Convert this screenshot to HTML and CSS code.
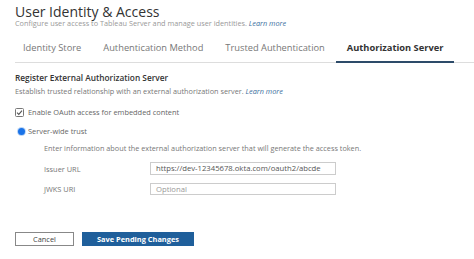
FILE: index.html
```html
<!DOCTYPE html>
<html>
<head>
<meta charset="utf-8">
<link rel="stylesheet" href="styles.css">
</head>
<body>
<div class="page">
  <header class="head">
    <h1 class="title">User Identity &amp; Access</h1>
    <p class="subtitle">Configure user access to Tableau Server and manage user identities. <a class="link">Learn more</a></p>
  </header>
  <nav class="tabs">
    <span class="tab">Identity Store</span>
    <span class="tab">Authentication Method</span>
    <span class="tab">Trusted Authentication</span>
    <span class="tab active">Authorization Server</span>
  </nav>
  <section class="section">
    <h2 class="heading">Register External Authorization Server</h2>
    <p class="desc">Establish trusted relationship with an external authorization server. <a class="link">Learn more</a></p>
    <label class="check-row">
      <span class="checkbox"><svg viewBox="0 0 9 9" width="9" height="9"><path d="M2 4.6 L3.8 6.4 L7 2.6" fill="none" stroke="#555" stroke-width="1.1"/></svg></span>
      <span>Enable OAuth access for embedded content</span>
    </label>
    <label class="radio-row">
      <span class="radio"></span>
      <span>Server-wide trust</span>
    </label>
    <div class="trust">
      <p class="info">Enter information about the external authorization server that will generate the access token.</p>
      <div class="form">
        <span class="label">Issuer URL</span>
        <div class="input">https://dev-12345678.okta.com/oauth2/abcde</div>
        <span class="label">JWKS URI</span>
        <div class="input placeholder">Optional</div>
      </div>
    </div>
    <div class="actions">
      <button class="btn cancel">Cancel</button>
      <button class="btn save">Save Pending Changes</button>
    </div>
  </section>
</div>
</body>
</html>
```
FILE: styles.css
```css
* { box-sizing: border-box; }
html, body { margin: 0; padding: 0; background: #fff; }
body { font-family: "Open Sans", "Liberation Sans", sans-serif; color: #555; }
.page { padding: 0 0 0 15px; }
.title { margin: 0; padding-top: 3px; font-size: 14px; line-height: 17px; font-weight: 400; color: #333; }
.subtitle { margin: 0; font-size: 7.3px; line-height: 7px; color: #999; }
.link { color: #3d6f9e; font-style: italic; }
.tabs { display: flex; margin-top: 7px; border-bottom: 1px solid #ddd; }
.tab { flex: none; white-space: nowrap; padding: 0 11px; line-height: 27px; font-size: 9.3px; color: #777; border-bottom: 2px solid transparent; margin-bottom: -1px; }
.tab:first-child { padding-left: 8px; }
.tab.active { color: #333; font-weight: 700; border-bottom-color: #2d4b69; }
.section { padding-right: 4px; }
.heading { margin: 9px 0 0; font-size: 8.3px; line-height: 12px; font-weight: 600; color: #333; }
.desc { margin: 2px 0 0; font-size: 7.3px; line-height: 10px; color: #777; }
.check-row, .radio-row { display: flex; align-items: center; font-size: 7.4px; line-height: 12px; color: #666; }
.check-row { margin-top: 10px; gap: 4px; }
.checkbox { width: 9px; height: 9px; border: 1px solid #777; border-radius: 1.5px; display: flex; }
.checkbox svg { margin: -1px; }
.radio-row { margin-top: 7px; padding-left: 3px; gap: 3px; }
.radio { width: 7px; height: 7px; border-radius: 50%; background: #1a73e8; box-shadow: 0 0 0 1px #bcd6f6; }
.trust { padding-left: 29px; }
.info { margin: 6px 0 0; font-size: 7.3px; line-height: 10px; color: #777; }
.form { display: grid; grid-template-columns: 106px 186px; row-gap: 8px; align-items: center; margin-top: 9px; }
.label { font-size: 7.4px; color: #777; }
.input { height: 13px; border: 1px solid #ccc; padding: 0 5px; font-size: 7.7px; line-height: 11px; color: #555; white-space: nowrap; overflow: hidden; }
.input.placeholder { height: 12px; line-height: 10px; color: #999; }
.actions { display: flex; gap: 8px; margin-top: 37px; }
.btn { height: 14px; padding: 0; font-family: inherit; font-size: 7.4px; line-height: 12px; border-radius: 0; }
.cancel { width: 59px; background: #fff; border: 1px solid #888; color: #444; }
.save { width: 112px; background: #1f5f9b; border: 1px solid #1f5f9b; color: #fff; font-weight: 700; }
```
